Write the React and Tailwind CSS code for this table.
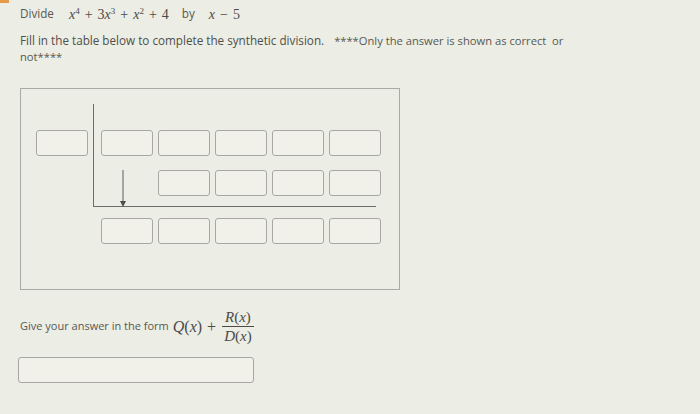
const Box = ({ className = '' }) => (
  <div className={`w-[52px] h-[26px] shrink-0 rounded-[3px] border border-[#a7a8a3] bg-[#f1f1ea] ${className}`} />
);

const X = () => <i className="font-['Liberation_Serif',serif]">x</i>;
const Op = ({ children }) => <span className="mx-[5px] not-italic">{children}</span>;

const Row = ({ n }) => (
  <div className="flex gap-[5px]">
    {Array.from({ length: n }).map((_, i) => (
      <Box key={i} />
    ))}
  </div>
);

export default function App() {
  return (
    <div className="w-[700px] h-[414px] overflow-hidden bg-[#ecede4] text-[#575954] font-['Open_Sans',sans-serif] text-[11.7px] pl-5 pt-[5px] relative">
      <div className="absolute left-0 top-0 w-[9px] h-[3px] bg-[#e59a4a]" />

      {/* prompt */}
      <div className="flex items-center h-[18px]">
        <span>Divide</span>
        <span className="ml-[15px] font-['Liberation_Serif',serif] text-[14px] text-[#4a4b47] whitespace-nowrap">
          <X /><sup className="text-[9px]">4</sup><Op>+</Op>3<X /><sup className="text-[9px]">3</sup><Op>+</Op><X /><sup className="text-[9px]">2</sup><Op>+</Op>4
        </span>
        <span className="ml-[13px]">by</span>
        <span className="ml-[14px] font-['Liberation_Serif',serif] text-[14px] text-[#4a4b47] whitespace-nowrap">
          <X /><Op>−</Op>5
        </span>
      </div>

      <div className="mt-[9px] leading-[16px]">
        <div className="flex items-baseline">
          <span className="text-[#4e504b]">Fill in the table below to complete the synthetic division.</span>
          <span className="ml-[10px] text-[11.2px]">****Only the answer is shown as correct&nbsp; or</span>
        </div>
        <div className="text-[11.2px]">not****</div>
      </div>

      {/* synthetic division table */}
      <div className="mt-[23px] w-[380px] h-[202px] border border-[#a9aaa4] pt-[15px]">
        <div className="flex">
          <Box className="ml-[15px] mt-[26px]" />
          <div className="ml-[5px]">
            <div className="w-[283px] h-[103px] border-l border-b border-[#6c6d69] pl-[7px] pt-[26px]">
              <Row n={5} />
              <div className="flex gap-[5px] mt-[14px]">
                <div className="w-[52px] shrink-0 flex justify-center pr-[8px]">
                  <svg width="8" height="38" viewBox="0 0 8 38">
                    <line x1="4" y1="0" x2="4" y2="32" stroke="#5d5e5a" strokeWidth="1" />
                    <path d="M1 31 L7 31 L4 37 Z" fill="#4d4e4a" />
                  </svg>
                </div>
                <Row n={4} />
              </div>
            </div>
            <div className="mt-[11px] pl-[8px]">
              <Row n={5} />
            </div>
          </div>
        </div>
      </div>

      {/* answer form */}
      <div className="mt-[18px] flex items-center text-[11px]">
        <span>Give your answer in the form</span>
        <span className="ml-[4px] font-['Liberation_Serif',serif] text-[16px] text-[#4a4b47] whitespace-nowrap">
          <i>Q</i>(<X />)<Op>+</Op>
        </span>
        <span className="ml-[1px] inline-flex flex-col items-center font-['Liberation_Serif',serif] text-[15px] text-[#4a4b47] leading-[18px]">
          <span className="px-[2px]"><i>R</i>(<X />)</span>
          <span className="w-full border-t border-[#4a4b47]" />
          <span className="px-[2px]"><i>D</i>(<X />)</span>
        </span>
      </div>

      <div className="mt-[12px] -ml-[2px] w-[236px] h-[26px] rounded-[3px] border border-[#a7a8a3] bg-[#f1f1ea]" />
    </div>
  );
}
